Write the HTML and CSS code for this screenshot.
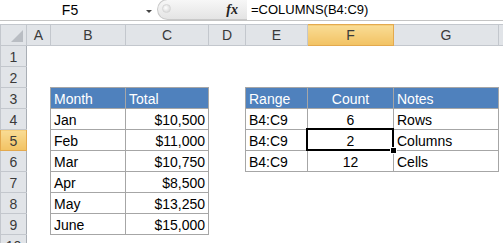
FILE: index.html
```html
<!DOCTYPE html>
<html lang="en">
<head>
    <meta charset="UTF-8">
    <title>COLUMNS function</title>
    <link rel="stylesheet" href="styles.css">
</head>
<body>
    <div class="fbar">
        <div class="namebox">F5</div>
        <div class="nb-arrow"></div>
        <div class="fx-zone">
            <span class="grip"></span>
            <span class="fx">fx</span>
        </div>
        <div class="formula">=COLUMNS(B4:C9)</div>
    </div>
    <div class="sheet">
        <table class="grid">
            <colgroup>
                <col class="c-rh"><col class="c-a"><col class="c-b"><col class="c-c"><col class="c-d">
                <col class="c-e"><col class="c-f"><col class="c-g"><col class="c-h">
            </colgroup>
            <thead>
                <tr>
                    <th class="corner"><span class="tri"></span></th>
                    <th>A</th><th>B</th><th>C</th><th>D</th><th>E</th>
                    <th class="active">F</th><th>G</th><th></th>
                </tr>
            </thead>
            <tbody>
                <tr><th>1</th><td></td><td></td><td></td><td></td><td></td><td></td><td></td><td></td></tr>
                <tr><th>2</th><td></td><td></td><td></td><td></td><td></td><td></td><td></td><td></td></tr>
                <tr>
                    <th>3</th><td></td>
                    <td class="t hd">Month</td><td class="t hd">Total</td>
                    <td></td>
                    <td class="t hd">Range</td><td class="t hd center">Count</td><td class="t hd">Notes</td>
                    <td></td>
                </tr>
                <tr>
                    <th>4</th><td></td>
                    <td class="t">Jan</td><td class="t num">$10,500</td>
                    <td></td>
                    <td class="t">B4:C9</td><td class="t center">6</td><td class="t">Rows</td>
                    <td></td>
                </tr>
                <tr>
                    <th class="active">5</th><td></td>
                    <td class="t">Feb</td><td class="t num">$11,000</td>
                    <td></td>
                    <td class="t">B4:C9</td><td class="t center sel"><span class="cursor"></span><span class="handle"></span>2</td><td class="t">Columns</td>
                    <td></td>
                </tr>
                <tr>
                    <th>6</th><td></td>
                    <td class="t">Mar</td><td class="t num">$10,750</td>
                    <td></td>
                    <td class="t">B4:C9</td><td class="t center">12</td><td class="t">Cells</td>
                    <td></td>
                </tr>
                <tr>
                    <th>7</th><td></td>
                    <td class="t">Apr</td><td class="t num">$8,500</td>
                    <td></td><td></td><td></td><td></td><td></td>
                </tr>
                <tr>
                    <th>8</th><td></td>
                    <td class="t">May</td><td class="t num">$13,250</td>
                    <td></td><td></td><td></td><td></td><td></td>
                </tr>
                <tr>
                    <th>9</th><td></td>
                    <td class="t">June</td><td class="t num">$15,000</td>
                    <td></td><td></td><td></td><td></td><td></td>
                </tr>
                <tr><th>10</th><td></td><td></td><td></td><td></td><td></td><td></td><td></td><td></td></tr>
            </tbody>
        </table>
    </div>
</body>
</html>
```

FILE: styles.css
```css
body {
    margin: 0;
    width: 503px;
    height: 243px;
    overflow: hidden;
    background: #fff;
    font-family: "Liberation Sans", Arial, sans-serif;
    font-size: 14px;
    color: #000;
}

/* formula bar */
.fbar {
    display: flex;
    height: 20px;
    border-bottom: 1px solid #c4c4c4;
    margin-bottom: 3px;
}
.namebox {
    width: 140px;
    text-align: center;
    line-height: 20px;
}
.nb-arrow {
    width: 17px;
    display: flex;
    align-items: center;
    justify-content: center;
}
.nb-arrow::before {
    content: "";
    border-left: 3px solid transparent;
    border-right: 3px solid transparent;
    border-top: 3px solid #444;
    margin-top: 2px;
}
.fx-zone {
    width: 90px;
    display: flex;
    align-items: center;
    justify-content: space-between;
    box-sizing: border-box;
    padding: 0 9px 0 4px;
    margin-top: -1px;
    border: 1px solid #c9c9c9;
    border-right: none;
    border-radius: 11px 0 0 11px;
    background: linear-gradient(#f7f7f7, #e4e4e4);
}
.grip {
    width: 7px;
    height: 7px;
    border-radius: 50%;
    background: radial-gradient(circle at 40% 40%, #ffffff, #cfcfcf);
    border: 1px solid #d6d6d6;
    margin-top: -2px;
}
.fx {
    font-family: "Liberation Serif", serif;
    font-style: italic;
    font-weight: bold;
    font-size: 14px;
    color: #222;
}
.formula {
    flex: 1;
    padding-left: 4px;
    line-height: 20px;
    font-size: 13px;
}

/* sheet grid */
.sheet {
    overflow: hidden;
}
.grid {
    border-collapse: collapse;
    table-layout: fixed;
    width: 540px;
}
.c-rh { width: 26px; }
.c-a { width: 24px; }
.c-b { width: 75px; }
.c-c { width: 83px; }
.c-d { width: 37px; }
.c-e { width: 62px; }
.c-f { width: 86px; }
.c-g { width: 105px; }
.c-h { width: 42px; }

.grid th,
.grid td {
    height: 21px;
    padding: 0 3px;
    box-sizing: border-box;
    line-height: 18px;
    vertical-align: bottom;
    white-space: nowrap;
    overflow: hidden;
}
.grid th {
    background: #e1e4e8;
    border: 1px solid #c3c7cd;
    color: #3a3a3a;
    font-weight: normal;
    text-align: center;
    padding: 0;
}
.grid thead th {
    height: 21px;
    vertical-align: middle;
    line-height: 20px;
}
.grid tbody th {
    border-right-color: #a9aeb5;
}
.grid th.active {
    background: linear-gradient(#f9dc95, #f2c263);
    border-color: #e3a94e;
    color: #3a3a3a;
}
.corner {
    position: relative;
}
.tri {
    position: absolute;
    right: 3px;
    bottom: 3px;
    border-left: 12px solid transparent;
    border-bottom: 12px solid #b9bdc3;
}

/* data tables */
.grid td.t {
    border: 1px solid #a6a6a6;
}
.grid td.hd {
    background: #4f81bd;
    color: #fff;
}
.num { text-align: right; }
.center { text-align: center; }

/* active cell */
.grid td.sel {
    position: relative;
    overflow: visible;
}
.cursor {
    position: absolute;
    left: -2px;
    top: -2px;
    right: -1px;
    bottom: -1px;
    border: 2px solid #000;
    z-index: 1;
}
.handle {
    position: absolute;
    right: -4px;
    bottom: -4px;
    width: 5px;
    height: 5px;
    background: #000;
    border: 1px solid #fff;
    z-index: 2;
}
```
